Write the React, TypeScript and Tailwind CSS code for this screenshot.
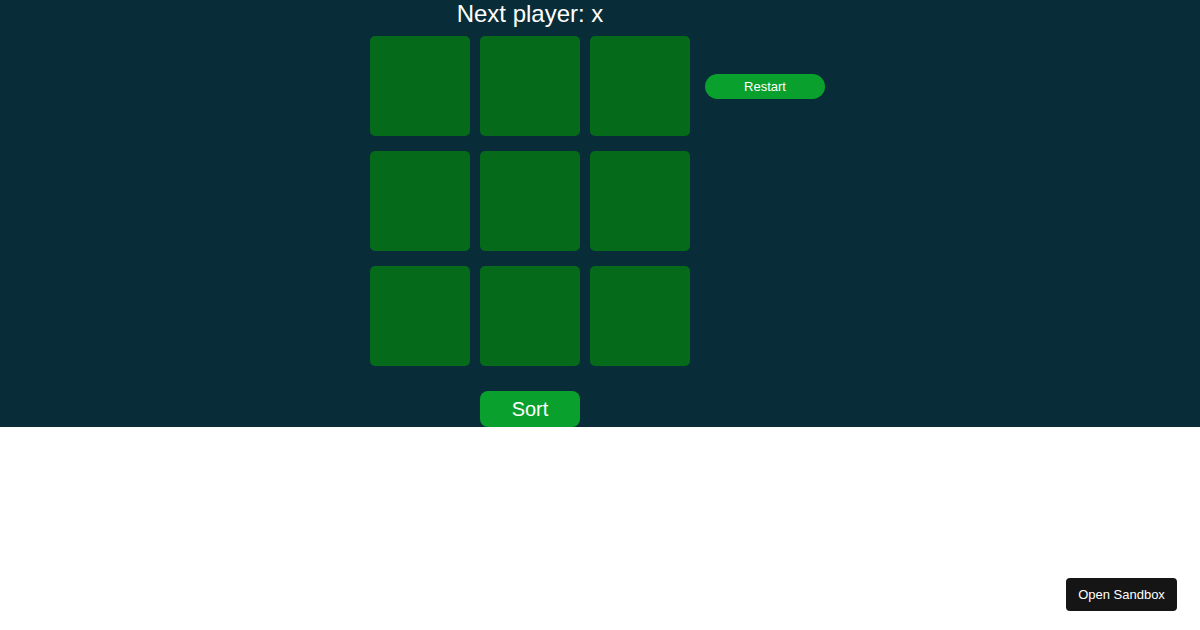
import React from "react";

const cells = Array.from({ length: 9 }, (_, i) => i);

export default function App() {
  return (
    <div className="relative h-[630px] w-[1200px] bg-white" style={{ fontFamily: '"Liberation Sans", Arial, sans-serif' }}>
      <div className="flex w-full bg-[#092d38] pl-[370px]">
        <div className="flex flex-col items-center">
          <h1 className="h-[36px] text-[24px] leading-[28px] font-normal text-white">Next player: x</h1>
          <div className="grid grid-cols-[100px_100px_100px] gap-x-[10px] gap-y-[15px]">
            {cells.map((c) => (
              <button key={c} className="h-[100px] w-[100px] rounded-[5px] bg-[#056a19]" />
            ))}
          </div>
          <button className="mt-[25px] h-[36px] w-[100px] rounded-[8px] bg-[#0aa02e] text-[20px] text-white">Sort</button>
        </div>
        <div className="ml-[15px] pt-[74px]">
          <button className="h-[25px] w-[120px] rounded-full bg-[#0aa02e] text-[13px] text-white">Restart</button>
        </div>
      </div>
      <button className="absolute right-[23px] bottom-[19px] h-[33px] w-[111px] rounded-[4px] bg-[#151515] text-[13px] text-white">
        Open Sandbox
      </button>
    </div>
  );
}
